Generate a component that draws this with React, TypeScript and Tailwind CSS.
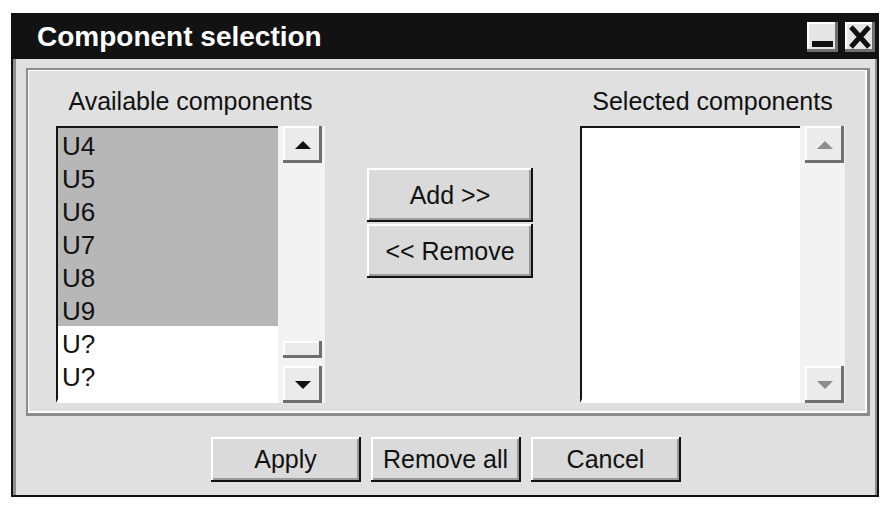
const raised =
  "shadow-[inset_-2px_-2px_0_#111,inset_2px_2px_0_#fff,inset_-4px_-4px_0_#9a9a9a]";
const scrollBtn = "shadow-[inset_-3px_-3px_0_#6f6f6f,inset_2px_2px_0_#fff]";

function Arrow({ up, color }: { up?: boolean; color: string }) {
  return (
    <svg width="16" height="8" viewBox="0 0 16 8">
      <polygon points={up ? "8,0 16,8 0,8" : "0,0 16,0 8,8"} fill={color} />
    </svg>
  );
}

function ScrollButton({ up, disabled }: { up?: boolean; disabled?: boolean }) {
  return (
    <div className={`h-[37px] w-[39px] bg-[#ebebeb] flex items-center justify-center ${scrollBtn}`}>
      <Arrow up={up} color={disabled ? "#8d8d8d" : "#111"} />
    </div>
  );
}

function Button({ label, className = "" }: { label: string; className?: string }) {
  return (
    <button
      className={`flex items-center justify-center bg-[#dadada] text-[25px] leading-none text-[#111] ${raised} ${className}`}
    >
      {label}
    </button>
  );
}

export default function App() {
  const items = [
    { name: "U4", selected: true },
    { name: "U5", selected: true },
    { name: "U6", selected: true },
    { name: "U7", selected: true },
    { name: "U8", selected: true },
    { name: "U9", selected: true },
    { name: "U?", selected: false },
    { name: "U?", selected: false },
  ];

  return (
    <div className="min-h-screen bg-white pl-[11px] pt-[13px] font-['Liberation_Sans',Arial,sans-serif]">
      <div className="flex h-[484px] w-[868px] flex-col border-2 border-[#111] bg-[#e0e0e0]">
        {/* title bar */}
        <div className="flex h-[44px] items-center justify-between bg-[#121212] pl-[24px] pr-[2px]">
          <span className="text-[28px] font-bold leading-none text-white">Component selection</span>
          <div className="flex gap-[7px]">
            <div className={`flex h-[30px] w-[31px] items-end justify-center bg-[#e6e6e6] pb-[5px] ${scrollBtn}`}>
              <div className="h-[6px] w-[21px] bg-[#111]" />
            </div>
            <div className={`flex h-[30px] w-[30px] items-center justify-center bg-[#e6e6e6] ${scrollBtn}`}>
              <svg width="24" height="24" viewBox="0 0 24 24">
                <path d="M3 2 L21 22 M21 2 L3 22" stroke="#111" strokeWidth="5" />
              </svg>
            </div>
          </div>
        </div>

        {/* body */}
        <div className="flex flex-1 flex-col border-l-[3px] border-r-2 border-[#8e8e8e]">
          <div className="ml-[10px] mr-[5px] mt-[9px] h-[348px] border-b-[3px] border-l-2 border-r-[3px] border-t-2 border-[#8c8c8c]">
            <div className="flex h-full border-b-2 border-l border-r-2 border-t border-white pl-[27px] pr-[20px] pt-[16px] text-[#111]">
              {/* available */}
              <div className="flex w-[269px] flex-col">
                <div className="text-center text-[25px] leading-[28px]">Available components</div>
                <div className="mt-[11px] flex h-[277px]">
                  <div className="flex w-[222px] flex-col border-b-4 border-l-2 border-t-2 border-b-white border-l-[#151515] border-t-[#151515] bg-white">
                    {items.map((it, i) => (
                      <div
                        key={i}
                        className={`h-[33px] pl-[4px] pt-[3px] text-[26px] leading-[30px] ${it.selected ? "bg-[#b7b7b7]" : "bg-white"}`}
                      >
                        {it.name}
                      </div>
                    ))}
                  </div>
                  <div className="flex w-[47px] flex-col bg-[#f3f3f3] pl-[5px]">
                    <ScrollButton up />
                    <div className="flex-1" />
                    <div className={`mb-[8px] h-[17px] w-[39px] bg-[#ebebeb] ${scrollBtn}`} />
                    <ScrollButton />
                  </div>
                </div>
              </div>

              {/* add/remove */}
              <div className="ml-[42px] mt-[81px] flex w-[166px] flex-col gap-[2px]">
                <Button label="Add >>" className="h-[54px] w-full" />
                <Button label="<< Remove" className="h-[54px] w-full" />
              </div>

              {/* selected */}
              <div className="ml-[47px] flex w-[265px] flex-col">
                <div className="text-center text-[25px] leading-[28px]">Selected components</div>
                <div className="mt-[11px] flex h-[277px]">
                  <div className="w-[220px] border-b-4 border-l-2 border-t-2 border-b-white border-l-[#151515] border-t-[#151515] bg-white" />
                  <div className="flex w-[45px] flex-col justify-between bg-[#f3f3f3] pl-[5px]">
                    <ScrollButton up disabled />
                    <ScrollButton disabled />
                  </div>
                </div>
              </div>
            </div>
          </div>

          <div className="mt-[21px] flex justify-center gap-[10px]">
            <Button label="Apply" className="h-[45px] w-[150px]" />
            <Button label="Remove all" className="h-[45px] w-[150px]" />
            <Button label="Cancel" className="h-[45px] w-[150px]" />
          </div>
        </div>
      </div>
    </div>
  );
}
